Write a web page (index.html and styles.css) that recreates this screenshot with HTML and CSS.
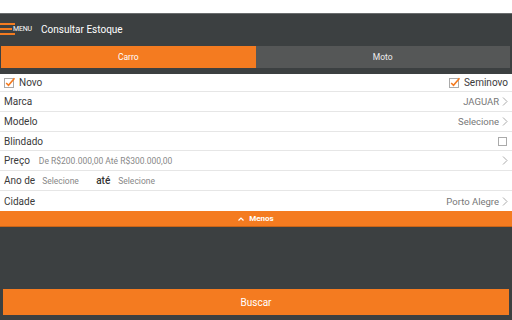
FILE: index.html
```html
<!DOCTYPE html>
<html>
<head>
<meta charset="utf-8">
<link rel="stylesheet" href="styles.css">
</head>
<body>
<div class="app">
  <div class="status"></div>
  <div class="header">
    <div class="menu">
      <svg class="menu-icon" width="16" height="14" viewBox="0 0 16 14"><rect x="0" y="1" width="15" height="2" fill="#f47b20"/><rect x="0" y="6" width="12" height="2" fill="#f47b20"/><rect x="0" y="11" width="15" height="2" fill="#f47b20"/></svg>
      <span class="menu-text">MENU</span>
    </div>
    <span class="title">Consultar Estoque</span>
  </div>
  <div class="tabs">
    <div class="tab active">Carro</div>
    <div class="tab">Moto</div>
  </div>
  <div class="form">
    <div class="row row-first">
      <label class="check"><svg width="12" height="11" viewBox="0 0 12 11"><rect x="0.5" y="1.5" width="9" height="9" fill="#fff" stroke="#aaa"/><path d="M2.2 6 L4.5 8.3 L10.5 1.2" fill="none" stroke="#f47b20" stroke-width="1.6"/></svg><span>Novo</span></label>
      <label class="check"><svg width="12" height="11" viewBox="0 0 12 11"><rect x="0.5" y="1.5" width="9" height="9" fill="#fff" stroke="#aaa"/><path d="M2.2 6 L4.5 8.3 L10.5 1.2" fill="none" stroke="#f47b20" stroke-width="1.6"/></svg><span>Seminovo</span></label>
    </div>
    <div class="row">
      <span class="label">Marca</span>
      <span class="value">JAGUAR<svg class="chev" width="6" height="9" viewBox="0 0 6 9"><path d="M1 0.5 L5 4.5 L1 8.5" fill="none" stroke="#aaa" stroke-width="1"/></svg></span>
    </div>
    <div class="row">
      <span class="label">Modelo</span>
      <span class="value">Selecione<svg class="chev" width="6" height="9" viewBox="0 0 6 9"><path d="M1 0.5 L5 4.5 L1 8.5" fill="none" stroke="#aaa" stroke-width="1"/></svg></span>
    </div>
    <div class="row row-short">
      <span class="label">Blindado</span>
      <span class="box"></span>
    </div>
    <div class="row">
      <span class="label preco">Preço</span>
      <span class="small grow">De R$200.000,00 Até R$300.000,00</span>
      <span class="value"><svg class="chev" width="6" height="9" viewBox="0 0 6 9"><path d="M1 0.5 L5 4.5 L1 8.5" fill="none" stroke="#aaa" stroke-width="1"/></svg></span>
    </div>
    <div class="row">
      <span class="label ano">Ano de</span>
      <span class="small ano1">Selecione</span>
      <span class="ate">até</span>
      <span class="small">Selecione</span>
    </div>
    <div class="row row-last">
      <span class="label">Cidade</span>
      <span class="value">Porto Alegre<svg class="chev" width="6" height="9" viewBox="0 0 6 9"><path d="M1 0.5 L5 4.5 L1 8.5" fill="none" stroke="#aaa" stroke-width="1"/></svg></span>
    </div>
  </div>
  <div class="menos"><svg width="6" height="4" viewBox="0 0 6 4"><path d="M0.5 3.5 L3 1 L5.5 3.5" fill="none" stroke="#fff" stroke-width="1.2"/></svg><span>Menos</span></div>
  <div class="spacer"></div>
  <div class="buscar">Buscar</div>
</div>
</body>
</html>
```
FILE: styles.css
```css
* { box-sizing: border-box; }
html, body { margin: 0; padding: 0; }
body {
  font-family: Roboto, "Liberation Sans", sans-serif;
  background: #3c4041;
  width: 512px;
  height: 320px;
  overflow: hidden;
}
.app {
  display: flex;
  flex-direction: column;
  height: 320px;
}
.status {
  height: 13px;
  background: #fff;
}
.header {
  height: 31px;
  border-top: 1px solid #6a6d6e;
  display: flex;
  align-items: center;
  color: #fff;
}
.menu {
  display: flex;
  align-items: center;
  width: 41px;
}
.menu-icon { display: block; margin-top: -1px; }
.menu-text {
  font-size: 7px;
  margin-left: -3px;
  letter-spacing: -0.2px;
}
.title {
  font-size: 10px;
}
.tabs {
  display: flex;
  margin: 2px 2px 0 1px;
  height: 22px;
}
.tab {
  flex: 1;
  display: flex;
  align-items: center;
  justify-content: center;
  background: #555757;
  color: #eee;
  font-size: 8.5px;
}
.tab.active {
  background: #f47b20;
  color: #fff;
}
.form {
  margin-top: 6px;
  background: #fff;
}
.row {
  height: 20px;
  border-bottom: 1px solid #e6e6e6;
  display: flex;
  align-items: center;
  padding: 0 4px 0 4px;
  color: #3a3a3a;
  font-size: 10px;
}
.row-first {
  height: 18px;
  justify-content: space-between;
}
.row-short { height: 19px; }
.row-last { border-bottom: none; height: 20px; }
.check {
  display: flex;
  align-items: center;
  gap: 3px;
}
.check svg { display: block; }
.label { margin-right: 8px; }
.label.preco { margin-right: 9px; }
.label.ano { margin-right: 7px; }
.value {
  margin-left: auto;
  color: #777;
  font-size: 9.5px;
  display: flex;
  align-items: center;
  gap: 3px;
}
.chev { display: block; }
.box {
  margin-left: auto;
  margin-right: 1px;
  width: 9px;
  height: 9px;
  border: 1px solid #aaa;
}
.small {
  font-size: 8.5px;
  color: #888;
}
.grow { flex: 1; }
.ano1 { width: 54px; }
.ate {
  font-size: 10px;
  font-weight: 500;
  color: #333;
  margin-right: 8px;
}
.menos {
  height: 16px;
  background: #f47b20;
  border-bottom: 1px solid #c86418;
  display: flex;
  align-items: center;
  justify-content: center;
  gap: 5px;
  color: #fff;
  font-size: 8px;
  font-weight: bold;
}
.menos svg { display: block; }
.spacer { flex: 1; }
.buscar {
  height: 26px;
  margin: 0 3px 5px 3px;
  background: #f47b20;
  color: #fff;
  display: flex;
  align-items: center;
  justify-content: center;
  font-size: 10px;
}
```
